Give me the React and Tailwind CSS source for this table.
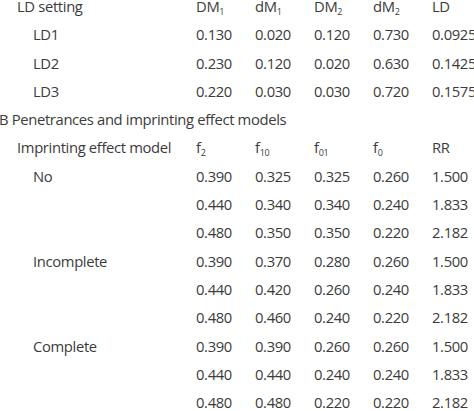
import React from "react";

const Row = ({ label, indent, cells }) => (
  <div className="flex h-[28.3px] leading-[28.3px] whitespace-nowrap">
    <div className={`w-[196px] shrink-0 ${indent ? "pl-[33px]" : "pl-[17px]"}`}>{label}</div>
    {cells.map((c, i) => (
      <div key={i} className="w-[59px] shrink-0">{c}</div>
    ))}
  </div>
);

const S = ({ b, s }) => (
  <span>
    {b}
    <span className="text-[9px] relative top-[3px]">{s}</span>
  </span>
);

export default function App() {
  const rowsA = [
    ["LD1", ["0.130", "0.020", "0.120", "0.730", "0.0925"]],
    ["LD2", ["0.230", "0.120", "0.020", "0.630", "0.1425"]],
    ["LD3", ["0.220", "0.030", "0.030", "0.720", "0.1575"]],
  ];
  const rowsB = [
    ["No", ["0.390", "0.325", "0.325", "0.260", "1.500"]],
    ["", ["0.440", "0.340", "0.340", "0.240", "1.833"]],
    ["", ["0.480", "0.350", "0.350", "0.220", "2.182"]],
    ["Incomplete", ["0.390", "0.370", "0.280", "0.260", "1.500"]],
    ["", ["0.440", "0.420", "0.260", "0.240", "1.833"]],
    ["", ["0.480", "0.460", "0.240", "0.220", "2.182"]],
    ["Complete", ["0.390", "0.390", "0.260", "0.260", "1.500"]],
    ["", ["0.440", "0.440", "0.240", "0.240", "1.833"]],
    ["", ["0.480", "0.480", "0.220", "0.220", "2.182"]],
  ];
  return (
    <div
      className="w-[474px] h-[411px] overflow-hidden bg-white text-[#3b3b3b] text-[14.8px] tracking-[-0.35px]"
      style={{ fontFamily: '"Open Sans", sans-serif' }}
    >
      <div className="-mt-[8px]">
        <Row
          label="LD setting"
          cells={[<S b="DM" s="1" />, <S b="dM" s="1" />, <S b="DM" s="2" />, <S b="dM" s="2" />, "LD"]}
        />
        {rowsA.map(([l, c], i) => (
          <Row key={i} label={l} indent cells={c} />
        ))}
        <div className="h-[28.3px] leading-[28.3px] whitespace-nowrap -ml-[1px]">
          B Penetrances and imprinting effect models
        </div>
        <Row
          label="Imprinting effect model"
          cells={[<S b="f" s="2" />, <S b="f" s="10" />, <S b="f" s="01" />, <S b="f" s="0" />, "RR"]}
        />
        {rowsB.map(([l, c], i) => (
          <Row key={i} label={l} indent cells={c} />
        ))}
      </div>
    </div>
  );
}
